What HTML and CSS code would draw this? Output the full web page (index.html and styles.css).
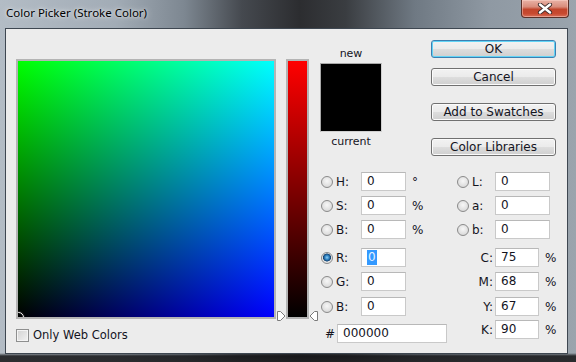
FILE: index.html
```html
<!DOCTYPE html>
<html>
<head>
<meta charset="utf-8">
<link rel="stylesheet" href="styles.css">
</head>
<body>
<div class="window">
  <div class="titlebar">
    <span class="title">Color Picker (Stroke Color)</span>
    <div class="close">
      <svg width="16" height="11" viewBox="0 0 16 11"><path d="M3 1.5 L13 9.5 M13 1.5 L3 9.5" stroke="#3a2a2a" stroke-width="4.2" stroke-linecap="round"/><path d="M3 1.5 L13 9.5 M13 1.5 L3 9.5" stroke="#fff" stroke-width="2.4" stroke-linecap="round"/></svg>
    </div>
  </div>
  <div class="panel">
    <div class="left-col">
      <div class="field"><span class="field-marker"></span></div>
      <label class="webcolors"><span class="checkbox"></span>Only Web Colors</label>
    </div>
    <div class="tri-col">
      <svg width="9" height="10" viewBox="0 0 9 10"><path d="M0.5 0.5 L3.5 0.5 L8 5 L3.5 9.5 L0.5 9.5 Z" fill="#fff" stroke="#7a7a7a"/></svg>
    </div>
    <div class="slider"></div>
    <div class="tri-col tri-right">
      <svg width="9" height="10" viewBox="0 0 9 10"><path d="M8.5 0.5 L5.5 0.5 L1 5 L5.5 9.5 L8.5 9.5 Z" fill="#fff" stroke="#7a7a7a"/></svg>
    </div>
    <div class="controls">
      <div class="top">
        <div class="swatch-block">
          <div class="sw-label">new</div>
          <div class="swatch"><div class="sw-new"></div><div class="sw-cur"></div></div>
          <div class="sw-label sw-current">current</div>
        </div>
        <div class="buttons">
          <div class="btn btn-default">OK</div>
          <div class="btn btn-near">Cancel</div>
          <div class="btn btn-gap">Add to Swatches</div>
          <div class="btn btn-gap">Color Libraries</div>
        </div>
      </div>
      <div class="fields">
        <div class="group-left">
          <div class="row"><span class="radio"></span><span class="lbl">H:</span><span class="inp">0</span><span class="unit">°</span></div>
          <div class="row r5"><span class="radio"></span><span class="lbl">S:</span><span class="inp">0</span><span class="unit">%</span></div>
          <div class="row r5"><span class="radio"></span><span class="lbl">B:</span><span class="inp">0</span><span class="unit">%</span></div>
          <div class="row r9"><span class="radio on"></span><span class="lbl">R:</span><span class="inp"><span class="sel">0</span></span></div>
          <div class="row r5"><span class="radio"></span><span class="lbl">G:</span><span class="inp">0</span></div>
          <div class="row r6"><span class="radio"></span><span class="lbl">B:</span><span class="inp">0</span></div>
          <div class="row r8"><span class="hash">#</span><span class="inp inp-hex">000000</span></div>
        </div>
        <div class="group-right">
          <div class="row"><span class="radio radio-r"></span><span class="lbl lbl-r">L:</span><span class="inp inp-w">0</span></div>
          <div class="row r5"><span class="radio radio-r"></span><span class="lbl lbl-r">a:</span><span class="inp inp-w">0</span></div>
          <div class="row r5"><span class="radio radio-r"></span><span class="lbl lbl-r">b:</span><span class="inp inp-w">0</span></div>
          <div class="row r9"><span class="clbl">C:</span><span class="inp inp-c">75</span><span class="unit">%</span></div>
          <div class="row r5"><span class="clbl">M:</span><span class="inp inp-c">68</span><span class="unit">%</span></div>
          <div class="row r6"><span class="clbl">Y:</span><span class="inp inp-c">67</span><span class="unit">%</span></div>
          <div class="row r4"><span class="clbl">K:</span><span class="inp inp-c">90</span><span class="unit">%</span></div>
        </div>
      </div>
    </div>
  </div>
</div>
</body>
</html>
```

FILE: styles.css
```css
html, body { margin: 0; padding: 0; }
body { width: 576px; height: 362px; overflow: hidden; font-family: "DejaVu Sans", sans-serif; font-size: 11px; color: #14141e; }

.window {
  width: 576px; height: 362px; box-sizing: border-box;
  padding-left: 5px;
  background:
    linear-gradient(to bottom, rgba(0,0,0,0) 0, rgba(0,0,0,0) 353px, rgba(20,20,22,0.85) 356px, rgba(30,30,32,0.9) 362px),
    linear-gradient(to right, #b3bcc5 0%, #a2acb6 20%, #7d8791 32%, #45494f 42%, #2c2d30 52%, #3a3d41 60%, #6f7983 72%, #8f99a3 85%, #9aa4ad 100%);
}

.titlebar { height: 28px; display: flex; align-items: flex-start; position: relative; }
.title {
  font-family: "Noto Sans", sans-serif; font-size: 11.5px; color: #000;
  margin-top: 6px; margin-left: 1px; line-height: 14px;
  text-shadow: 0 0 6px rgba(255,255,255,0.8), 0 0 3px rgba(255,255,255,0.6);
}
.close {
  position: absolute; left: 516px; top: 0; width: 48px; height: 18px; box-sizing: border-box;
  border: 1px solid #5a3028; border-top: none; border-radius: 0 0 4px 4px;
  background: linear-gradient(to bottom, #e9b2a6 0%, #d98d7c 40%, #c2452c 55%, #c84a30 80%, #d8705a 100%);
  box-shadow: inset 0 0 0 1px rgba(255,220,210,0.45);
  display: flex; align-items: center; justify-content: center;
}

.panel {
  width: 563px; height: 326px; box-sizing: border-box;
  border: 1px solid #3e4751; background: #ececec;
  display: flex; padding-left: 10px;
}

.left-col { margin-top: 30px; width: 260px; }
.field {
  width: 256px; height: 256px; border: 2px solid #b4b4b4; position: relative; overflow: hidden;
  background: linear-gradient(to bottom, #00ff00, #000000), linear-gradient(to right, #000000, #0000ff);
  background-blend-mode: screen;
}
.field-marker {
  position: absolute; left: -5px; bottom: -6px; width: 9px; height: 9px; border-radius: 50%;
  border: 1px solid #fff; box-shadow: 0 0 0 1px #222;
}
.webcolors { display: flex; align-items: center; margin-top: 9px; height: 14px; font-size: 11.5px; }
.checkbox {
  width: 11px; height: 11px; border: 1px solid #8e8f8f; margin-right: 4px;
  background: linear-gradient(135deg, #d2d2d2, #f2f2f2); box-shadow: inset 0 0 0 1px #f4f4f4;
}

.tri-col { width: 10px; margin-top: 30px; height: 262px; display: flex; align-items: flex-end; }
.tri-col svg { display: block; margin-left: 1px; }
.tri-right { width: 11px; }
.tri-right svg { margin-left: 0; }
.slider {
  margin-top: 30px; width: 19px; height: 256px; border: 2px solid #b4b4b4;
  background: linear-gradient(to bottom, #ff0000, #000000);
}

.controls { margin-top: 11px; width: 247px; }
.top { display: flex; }
.swatch-block { width: 62px; padding-top: 7px; }
.sw-label { text-align: center; line-height: 14px; height: 14px; }
.swatch { margin-top: 2px; height: 67px; border: 1px solid #a8a8a8; border-right-color: #d0d0d0; border-bottom-color: #d0d0d0; display: flex; flex-direction: column; }
.sw-new, .sw-cur { flex: 1; background: #000; }
.sw-current { margin-top: 3px; }

.buttons { margin-left: 49px; width: 125px; padding-bottom: 10px; }
.btn {
  height: 18px; box-sizing: border-box; border: 1px solid #707070; border-radius: 3px;
  background: linear-gradient(to bottom, #f2f2f2 0%, #ebebeb 48%, #dddddd 52%, #cfcfcf 100%);
  box-shadow: inset 0 0 0 1px #fbfbfb;
  text-align: center; font-size: 12px; line-height: 16px;
}
.btn-near { margin-top: 10px; }
.btn-gap { margin-top: 17px; }
.btn-default { border-color: #3c7fb1; box-shadow: inset 0 0 0 1px #62d4f6; }

.fields { display: flex; margin-top: 6px; }
.group-left { width: 137px; }
.group-right { width: 110px; }
.row { display: flex; align-items: center; height: 19px; }
.r4 { margin-top: 4px; }
.r5 { margin-top: 5px; }
.r6 { margin-top: 6px; }
.r8 { margin-top: 8px; }
.r9 { margin-top: 9px; }
.radio {
  width: 10px; height: 10px; border-radius: 50%; border: 1px solid #8a8a8a; margin-left: 1px;
  background: radial-gradient(circle at 50% 40%, #f7f7f7 0%, #e2e2e2 55%, #cfcfcf 100%);
}
.radio-r { margin-left: 0; }
.radio.on { background: radial-gradient(circle at 50% 45%, #8fd0f5 0%, #2b7fc0 30%, #16426e 50%, #e8e8e8 58%, #d4d4d4 100%); }
.lbl { margin-left: 3px; width: 25px; font-size: 12px; }
.lbl-r { width: 23px; margin-left: 3px; }
.inp {
  width: 45px; height: 19px; box-sizing: border-box; background: #fff;
  border: 1px solid #c9c9c9; border-top-color: #b8b8b8;
  padding-left: 5px; font-size: 12px; line-height: 17px;
}
.inp-w { width: 55px; }
.inp-c { width: 44px; }
.inp-hex { width: 110px; margin-left: 2px; }
.hash { margin-left: 5px; font-size: 12px; }
.sel { background: #3399ff; color: #e8f2ff; display: inline-block; line-height: 15px; padding: 0 1px; }
.unit { margin-left: 6px; font-size: 12px; }
.clbl { width: 38px; text-align: right; padding-right: 2px; box-sizing: border-box; font-size: 12px; }
```
